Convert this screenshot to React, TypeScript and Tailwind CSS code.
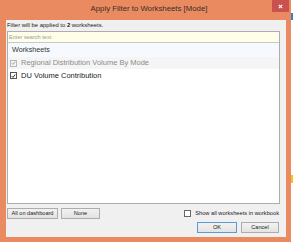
import React from "react";

function Check({ disabled }: { disabled?: boolean }) {
  return (
    <span
      className={`flex h-[7px] w-[7px] items-center justify-center border ${
        disabled ? "border-[#b8b8b8] bg-[#f4f4f4]" : "border-[#555] bg-white"
      }`}
    >
      <svg viewBox="0 0 8 8" className="h-[6px] w-[6px]">
        <path
          d="M1.2 4.2 L3.2 6.2 L6.8 1.6"
          fill="none"
          stroke={disabled ? "#9a9a9a" : "#111"}
          strokeWidth="1.4"
        />
      </svg>
    </span>
  );
}

function Btn({ label, w, primary }: { label: string; w: string; primary?: boolean }) {
  return (
    <button
      className={`${w} flex h-[11px] items-center justify-center border bg-gradient-to-b from-[#f2f2f2] to-[#e3e3e3] text-[5.6px] leading-none text-[#222] ${
        primary ? "border-[#5b9bd5]" : "border-[#adadad]"
      }`}
    >
      {label}
    </button>
  );
}

export default function App() {
  return (
    <div className="relative flex h-[244px] w-[300px] overflow-hidden bg-white font-['Liberation_Sans',Arial,sans-serif]">
      {/* Dialog window */}
      <div className="flex h-[242px] w-[291px] flex-col bg-[#ea8a60] pb-[5px] pl-[6px] pr-[5px]">
        {/* Title bar */}
        <div className="relative flex h-[20px] items-center justify-center">
          <span className="pb-[3px] pl-[6px] text-[7.8px] text-[#3a2e28]">
            Apply Filter to Worksheets [Mode]
          </span>
          <div className="absolute right-[-3px] top-0 flex h-[12px] w-[17px] items-center justify-center bg-[#c9524f]">
            <svg viewBox="0 0 6 6" className="h-[5px] w-[5px]">
              <path d="M1 1 L5 5 M5 1 L1 5" stroke="#fff" strokeWidth="1.3" />
            </svg>
          </div>
        </div>

        {/* Client area */}
        <div className="flex flex-1 flex-col bg-[#f0f0f0] pl-[1px] pr-[6px]">
          <div className="flex h-[11px] items-center text-[5.9px] text-[#222]">
            Filter will be applied to&nbsp;<b>2</b>&nbsp;worksheets.
          </div>

          {/* List box */}
          <div className="flex h-[173px] flex-col border border-[#adadad] bg-white">
            <div className="flex h-[11px] items-center border-b border-[#c8c8c8] bg-[#fefee9] pl-[1px] text-[5.6px] text-[#9a9a9a]">
              Enter search text
            </div>
            <div className="flex h-[14px] items-center bg-[#f6f9fd] pl-[4px] text-[7.2px] text-[#333]">
              Worksheets
            </div>
            <div className="flex h-[12px] items-center gap-[4px] bg-[#f5f5f5] pl-[2px] text-[7.5px] text-[#8c8c8c]">
              <Check disabled />
              <span>Regional Distribution Volume By Mode</span>
            </div>
            <div className="flex h-[13px] items-center gap-[4px] pl-[2px] text-[7.5px] text-[#222]">
              <Check />
              <span>DU Volume Contribution</span>
            </div>
          </div>

          {/* Footer */}
          <div className="mt-[4px] flex items-center justify-between">
            <div className="flex gap-[3px]">
              <Btn label="All on dashboard" w="w-[51px]" />
              <Btn label="None" w="w-[39px]" />
            </div>
            <div className="flex items-center gap-[4px] pr-[1px] text-[5.7px] text-[#222]">
              <span className="h-[7px] w-[7px] border border-[#666] bg-white" />
              <span>Show all worksheets in workbook</span>
            </div>
          </div>
          <div className="mt-[3px] flex justify-end gap-[4px] pr-[1px]">
            <Btn label="OK" w="w-[40px]" primary />
            <Btn label="Cancel" w="w-[38px]" />
          </div>
        </div>
      </div>

      {/* Desktop behind */}
      <div className="relative flex-1">
        <div className="absolute left-0 top-[13px] h-[7px] w-[2px] bg-[#3b7fc4]" />
        <div className="absolute left-0 top-[175px] h-[8px] w-[2px] bg-[#f0c419]" />
      </div>
    </div>
  );
}
